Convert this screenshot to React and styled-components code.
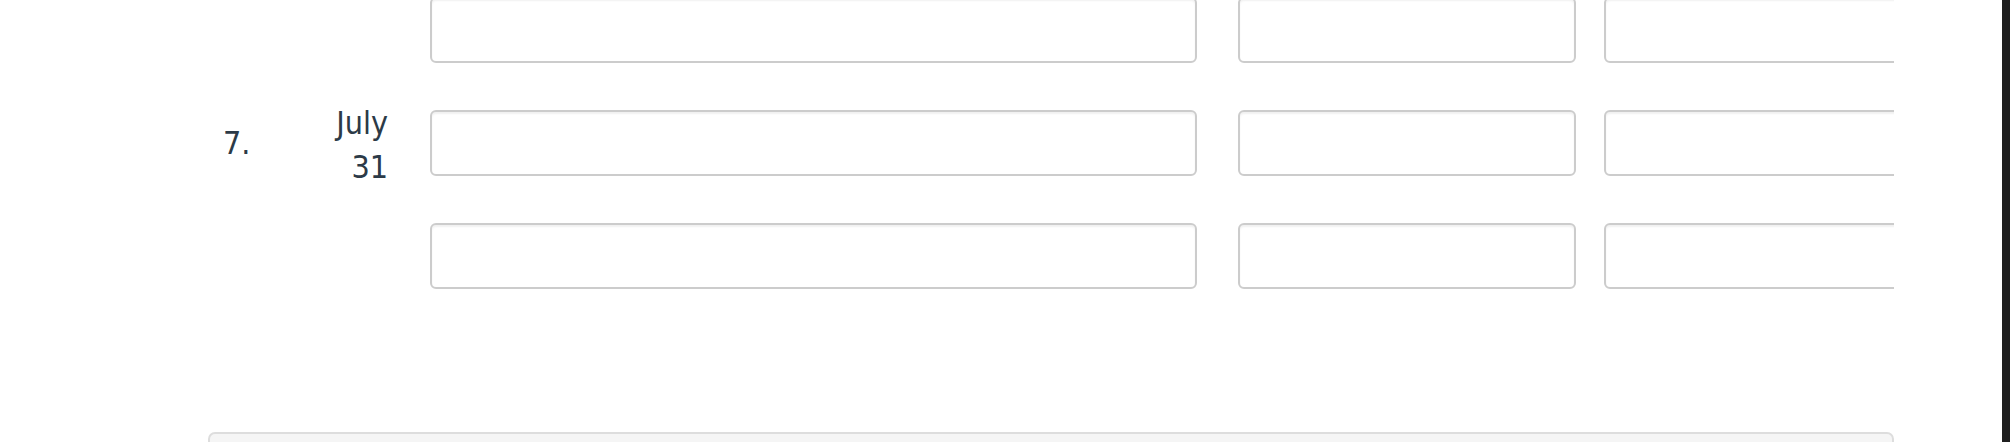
import React from "react";
import styled, { createGlobalStyle } from "styled-components";

const Global = createGlobalStyle`
  html, body, #root { margin: 0; padding: 0; height: 100%; }
  body { background: #ffffff; overflow: hidden; font-family: "DejaVu Sans Condensed", "DejaVu Sans", Verdana, sans-serif; }
`;

const Shell = styled.div`
  display: flex;
  height: 100%;
`;

const Main = styled.main`
  flex: 1;
  padding-left: 208px;
  overflow: hidden;
`;

const Edge = styled.div`
  width: 8px;
  background: #1f1f1f;
`;

const Table = styled.div`
  width: 1686px;
  overflow: hidden;
  display: flex;
  flex-direction: column;
  gap: 47px;
  margin-top: -3px;
`;

const Row = styled.div`
  display: flex;
  align-items: center;
  height: 66px;
`;

const NumCell = styled.div`
  width: 110px;
  flex: none;
  box-sizing: border-box;
  padding-left: 15px;
  font-size: 32px;
  line-height: 44px;
  color: #2c3a47;
`;

const DateCell = styled.div`
  width: 70px;
  flex: none;
  text-align: right;
  font-size: 32px;
  line-height: 44px;
  color: #2c3a47;
  margin-right: 42px;
  transform: translateY(2px);
`;

const Field = styled.input`
  flex: none;
  box-sizing: border-box;
  width: ${(p) => p.$w}px;
  height: 66px;
  margin-right: ${(p) => p.$gap || 0}px;
  border: 2px solid #cccccc;
  border-radius: 6px;
  background: #fff;
  box-shadow: inset 0 2px 2px rgba(0, 0, 0, 0.06);
  padding: 0 20px;
  font-size: 24px;
  outline: none;
`;

const Panel = styled.div`
  width: 1686px;
  box-sizing: border-box;
  height: 60px;
  margin-top: 143px;
  background: #f5f5f5;
  border: 2px solid #dddddd;
  border-radius: 7px;
`;

const rows = [
  { num: "", date: "" },
  { num: "7.", date: "July 31" },
  { num: "", date: "" },
];

export default function App() {
  return (
    <Shell>
      <Global />
      <Main>
        <Table>
          {rows.map((r, i) => (
            <Row key={i}>
              <NumCell>{r.num}</NumCell>
              <DateCell>{r.date}</DateCell>
              <Field $w={767} $gap={41} />
              <Field $w={338} $gap={28} />
              <Field $w={338} />
            </Row>
          ))}
        </Table>
        <Panel />
      </Main>
      <Edge />
    </Shell>
  );
}
